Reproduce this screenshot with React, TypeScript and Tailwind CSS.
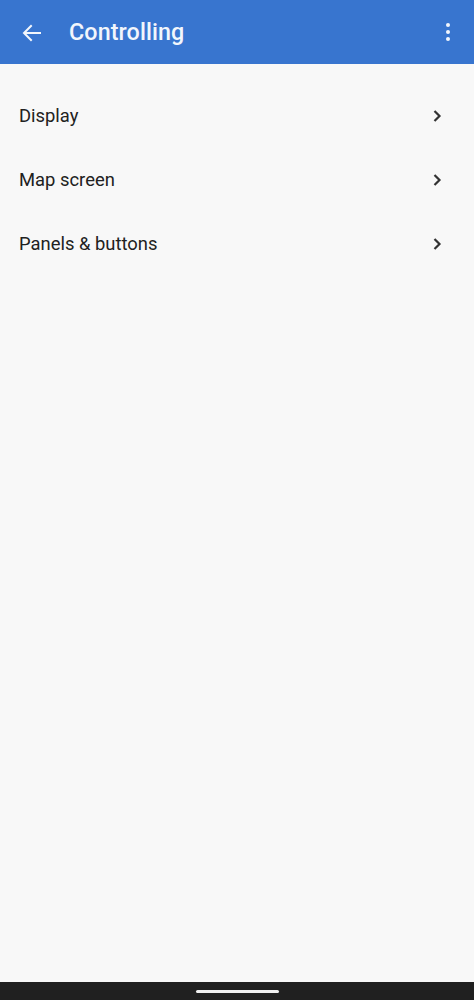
const items = ["Display", "Map screen", "Panels & buttons"];

export default function App() {
  return (
    <div className="flex h-[1000px] w-[474px] flex-col bg-[#f8f8f8] font-['Roboto',sans-serif]">
      {/* Toolbar */}
      <header className="flex h-16 shrink-0 items-center bg-[#3875cf] text-white">
        <button className="ml-[20px] mt-[1px] flex h-6 w-6 items-center justify-center">
          <svg width="24" height="24" viewBox="0 0 24 24" fill="none">
            <path d="M20 12H4.5M11 5l-7 7 7 7" stroke="#f2f6fc" strokeWidth="2" strokeLinecap="square" />
          </svg>
        </button>
        <h1 className="ml-[25px] mt-[1px] text-[23.3px] font-medium tracking-[0.1px] text-[#f2f6fc]">Controlling</h1>
        <button className="ml-auto mr-[14px] flex h-6 w-6 items-center justify-center">
          <svg width="24" height="24" viewBox="0 0 24 24" fill="#f2f6fc">
            <circle cx="12" cy="5" r="2" />
            <circle cx="12" cy="12" r="2" />
            <circle cx="12" cy="19" r="2" />
          </svg>
        </button>
      </header>

      {/* List */}
      <div className="flex flex-1 flex-col pt-5">
        {items.map((item) => (
          <div key={item} className="flex h-16 items-center pl-[19px] pr-[30px]">
            <span className="text-[18.4px] text-[#212121]">{item}</span>
            <svg className="ml-auto" width="14" height="14" viewBox="0 0 14 14" fill="none">
              <path d="M4.5 2l5 5-5 5" stroke="#333" strokeWidth="2.2" />
            </svg>
          </div>
        ))}
      </div>

      {/* Nav bar */}
      <div className="flex h-[18px] shrink-0 justify-center bg-[#202020] pt-[8px]">
        <div className="h-[3px] w-[83px] rounded-full bg-[#f0f0f0]" />
      </div>
    </div>
  );
}
